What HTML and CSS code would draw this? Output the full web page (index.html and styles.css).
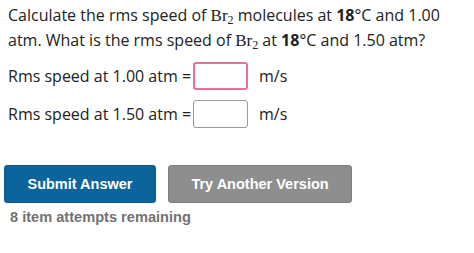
FILE: index.html
```html
<!DOCTYPE html>
<html>
<head>
<meta charset="utf-8">
<link rel="stylesheet" href="styles.css">
</head>
<body>
<div class="q">
  <p class="text">Calculate the rms speed of <span class="m">Br<sub>2</sub></span> molecules at <b>18</b>°C and 1.00 atm. What is the rms speed of <span class="m">Br<sub>2</sub></span> at <b>18</b>°C and 1.50 atm?</p>
  <div class="row first"><span class="lbl">Rms speed at 1.00 atm =</span><span class="box active"></span><span class="unit">m/s</span></div>
  <div class="row"><span class="lbl">Rms speed at 1.50 atm =</span><span class="box"></span><span class="unit">m/s</span></div>
</div>
<div class="actions">
  <button class="btn submit">Submit Answer</button>
  <button class="btn other">Try Another Version</button>
</div>
<div class="remain">8 item attempts remaining</div>
</body>
</html>
```
FILE: styles.css
```css
body {
  margin: 0;
  background: #fff;
  font-family: "Open Sans", sans-serif;
  color: #222;
}
.q {
  padding: 0 0 0 8px;
}
.text {
  margin: 0;
  padding-top: 3px;
  font-size: 16px;
  line-height: 24px;
  width: 440px;
}
.text b { font-weight: 700; }
.m {
  font-family: "Liberation Serif", "DejaVu Serif", serif;
  font-size: 17px;
}
.m sub {
  font-size: 12px;
  vertical-align: -3px;
  line-height: 1;
}
.row {
  display: flex;
  align-items: center;
  font-size: 16px;
  height: 28px;
}
.row.first { margin-top: 9px; }
.row + .row { margin-top: 10px; }
.lbl { width: 185px; }
.box {
  box-sizing: border-box;
  width: 55px;
  height: 28px;
  border: 1px solid #9a9a9a;
  border-radius: 3px;
}
.box.active {
  border: 2px solid #e2739c;
}
.unit { margin-left: 11px; }
.actions {
  display: flex;
  gap: 12px;
  margin: 37px 0 0 4px;
}
.btn {
  box-sizing: border-box;
  height: 38px;
  border-radius: 3px;
  font-family: "Liberation Sans", Arial, sans-serif;
  font-weight: 700;
  font-size: 14.5px;
  color: #fff;
  padding: 0;
}
.submit {
  width: 152px;
  background: #0b659c;
  border: 1px solid #095a8b;
}
.other {
  width: 184px;
  background: #8e8e8e;
  border: 1px solid #7d7d7d;
}
.remain {
  margin: 6px 0 0 10px;
  font-family: "Liberation Sans", Arial, sans-serif;
  font-weight: 700;
  font-size: 14.6px;
  color: #727272;
}
```
